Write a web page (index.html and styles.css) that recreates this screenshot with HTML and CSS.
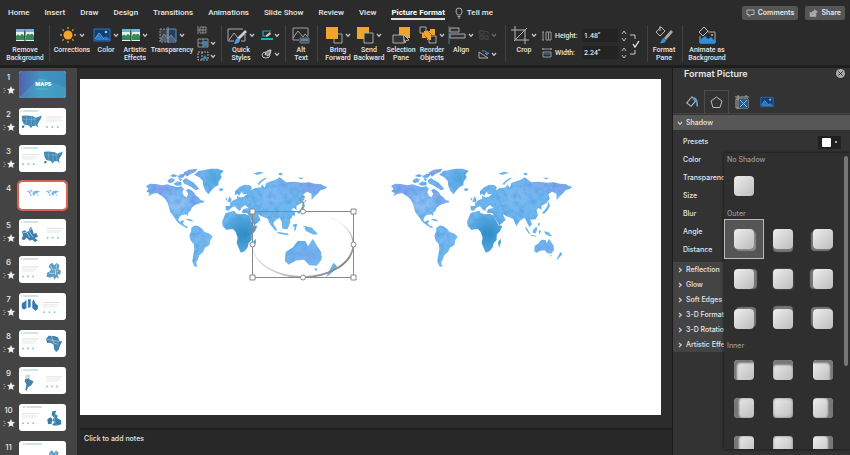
FILE: index.html
```html
<!DOCTYPE html>
<html lang="en">
<head>
<meta charset="utf-8">
<meta name="viewport" content="width=device-width, initial-scale=1">
<title>Presentation editor</title>
<link rel="stylesheet" href="styles.css">
</head>
<body>
<svg class="defs" aria-hidden="true">
  <defs>
    <radialGradient id="violet"><stop offset="0" stop-color="#8b9bee" stop-opacity=".75"/><stop offset="1" stop-color="#8e9df0" stop-opacity="0"/></radialGradient>
    <radialGradient id="pale"><stop offset="0" stop-color="#a3c0f6" stop-opacity=".8"/><stop offset="1" stop-color="#a9c8fa" stop-opacity="0"/></radialGradient>
    <radialGradient id="deep"><stop offset="0" stop-color="#2288bd" stop-opacity=".95"/><stop offset=".6" stop-color="#2d90c8" stop-opacity=".5"/><stop offset="1" stop-color="#2f95cc" stop-opacity="0"/></radialGradient>
    <pattern id="wash" width="600" height="330" patternUnits="userSpaceOnUse">
      <rect width="600" height="330" fill="#6fb7ef"/>
      <ellipse cx="75" cy="85" rx="70" ry="45" fill="url(#violet)"/>
      <ellipse cx="125" cy="130" rx="52" ry="40" fill="url(#pale)"/>
      <ellipse cx="185" cy="105" rx="35" ry="40" fill="url(#violet)"/>
      <ellipse cx="160" cy="40" rx="50" ry="30" fill="url(#violet)"/>
      <ellipse cx="235" cy="55" rx="35" ry="40" fill="url(#deep)" opacity=".4"/>
      <ellipse cx="325" cy="222" rx="70" ry="72" fill="url(#deep)"/>
      <ellipse cx="410" cy="110" rx="55" ry="45" fill="url(#pale)" opacity=".4"/>
      <ellipse cx="530" cy="80" rx="60" ry="34" fill="url(#violet)"/>
      <ellipse cx="455" cy="80" rx="45" ry="30" fill="url(#violet)" opacity=".5"/>
      <ellipse cx="200" cy="232" rx="35" ry="35" fill="url(#pale)" opacity=".4"/>
      <ellipse cx="495" cy="262" rx="35" ry="25" fill="url(#violet)" opacity=".4"/>
    </pattern>
    <filter id="coast" x="-5%" y="-5%" width="110%" height="110%" color-interpolation-filters="sRGB">
      <feTurbulence type="fractalNoise" baseFrequency=".25" numOctaves="2" seed="4" result="grain"/>
      <feDisplacementMap in="SourceGraphic" in2="grain" scale="3" xChannelSelector="R" yChannelSelector="G" result="shape"/>
      <feTurbulence type="fractalNoise" baseFrequency=".06" numOctaves="3" seed="9"/>
      <feColorMatrix values="0 0 0 0 .3  0 0 0 0 .58  0 0 0 0 .86  1.200 0 0 0 -.5"/>
      <feComposite in2="shape" operator="in" result="mottle"/>
      <feMerge><feMergeNode in="shape"/><feMergeNode in="mottle"/></feMerge>
    </filter>
    <linearGradient id="rim" x1="0" y1="0" x2="1" y2="1"><stop offset=".1" stop-color="#aaa" stop-opacity=".05"/><stop offset=".5" stop-color="#aaa" stop-opacity=".5"/><stop offset=".85" stop-color="#888"/></linearGradient>
    <linearGradient id="cover" x1="0" y1="0" x2="1" y2="0"><stop offset="0" stop-color="#5461ad"/><stop offset=".45" stop-color="#4095c2"/><stop offset="1" stop-color="#3c8abd"/></linearGradient>
  </defs>

  <symbol id="land" viewBox="0 0 600 330">
    <g fill="url(#wash)" filter="url(#coast)">
      <path d="M33 78 45 71 62 72 82 76 98 73 112 78 126 82 138 78 147 86 142 96 147 108 155 112 160 101 153 91 162 86 176 96 183 107 190 112 203 127 192 131 180 135 170 143 167 152 160 158 159 168 153 163 139 166 133 172 130 180 135 186 142 181 148 183 143 190 150 197 160 201 154 204 140 196 125 184 117 170 107 158 102 144 98 129 91 117 79 107 66 99 52 102 40 109 44 99 34 94 41 87Z"/>
      <path d="M97 62 108 54 120 58 115 67 103 70ZM115 72 127 64 139 67 140 76 126 77ZM104 48 117 42 128 47 119 52ZM127 49 140 41 151 43 146 52 134 56ZM145 38 161 29 187 26 181 36 166 42 156 50ZM143 61 153 54 163 61 174 67 186 79 193 87 182 91 170 82 158 75 147 71ZM129 56 141 57 137 64ZM152 177 165 177 176 184 166 184ZM197 120 208 123 204 130Z"/>
      <path d="M178 44 189 34 212 29 229 26 248 26 266 33 256 43 260 52 251 65 250 76 238 82 228 92 221 103 211 93 205 78 203 62 193 52ZM251 86 264 85 264 91 256 94Z"/>
      <path d="M169 203 180 196 190 199 201 206 209 216 224 221 233 230 226 241 223 255 210 263 204 276 193 286 189 297 184 306 185 317 190 321 178 319 172 304 175 286 178 268 176 252 167 241 163 227 168 216Z"/>
      <path d="M272 159 298 152 302 160 315 163 329 161 342 167 350 185 356 196 367 198 361 212 350 224 350 240 341 249 338 262 329 274 317 278 311 264 305 249 308 233 302 216 294 207 274 209 263 198 261 186 267 171ZM354 246 362 236 363 247 357 263Z"/>
      <path d="M272 151 272 138 287 138 284 130 295 121 306 116 306 107 315 112 325 111 337 102 325 103 319 95 313 107 307 101 300 106 300 94 312 82 328 74 343 75 351 82 347 91 359 85 377 82 382 73 389 84 394 69 405 65 421 60 434 52 445 60 454 67 478 65 500 68 520 67 540 71 558 73 577 83 566 88 556 91 550 99 538 110 530 120 529 101 516 95 505 103 509 116 499 130 484 137 485 151 476 143 469 150 474 165 467 178 451 179 456 193 448 202 439 182 433 173 420 182 409 199 400 177 383 170 368 162 377 180 358 196 346 176 337 159 320 158 325 147 340 144 330 135 319 143 315 153 307 148 300 139 288 143 282 152ZM277 125 284 108 290 119 287 127ZM271 116 277 113 275 122Z"/>
      <path d="M367 72 378 61 391 53 395 55 379 66 373 75ZM430 40 440 38 443 46 433 45ZM355 41 373 35 386 38 368 44ZM488 53 506 53 500 58ZM486 158 495 149 502 139 505 124 510 137 503 151 492 162ZM564 80 571 77 574 81Z"/>
    </g>
  </symbol>
  <symbol id="oceania" viewBox="0 0 600 330">
    <g fill="url(#wash)" filter="url(#coast)">
      <path d="M464 258 476 250 484 239 496 240 500 248 508 236 514 247 521 258 522 270 514 281 502 280 494 271 481 272 469 279 463 273ZM510 285 515 286 513 290ZM541 276 547 282 542 288 535 296 529 300 532 293Z"/>
      <path d="M435 200 441 205 451 222 447 222 437 208ZM458 211 469 200 472 207 467 220 459 219ZM476 212 483 211 479 224ZM492 214 506 217 516 228 509 229 497 223ZM450 224 468 227 469 230 452 227ZM475 188 479 190 479 198 474 196Z"/>
    </g>
  </symbol>

  <symbol id="caret" viewBox="0 0 6 6"><path d="M1 2 3 4.300 5 2" fill="none" stroke="#ccc" stroke-width="1.200"/></symbol>
  <symbol id="star" viewBox="0 0 12 10"><path d="M8 1 9.200 3.700 12 4 9.900 5.900 10.500 9 8 7.400 5.500 9 6.100 5.900 4 4 6.800 3.700Z" fill="#eee"/><path d="M0 3.500h2M1 5.500h2M0 7.500h2" stroke="#999" stroke-width=".7"/></symbol>
  <symbol id="picture" viewBox="0 0 18 18"><path d="M1 3h16v12H1z" fill="#123f70" stroke="#2f74b8"/><path d="m2 14 4-6 4 5 3-3 4 4z" fill="#2d7cc8"/><path d="m2 13 4-6 5 6" fill="none" stroke="#64aef0"/><circle cx="13" cy="6" r="1.300" fill="#8ac8ff"/></symbol>
  <symbol id="scenery" viewBox="0 0 18 16"><path d="M0 2h18v12H0z" fill="#e5f2f0"/><path d="M0 13V9q2-3 4 0 2-4 4 0V4h1v9zM10 13V9q2-4 4-1 2-3 4 1v4z" fill="#318b54"/><path d="M0 2h8v3H0zM10 2h8v3h-8z" fill="#65b5df"/><path d="M9 0v16" stroke="#2b2b2b"/></symbol>
  <symbol id="paint" viewBox="0 0 16 16"><path d="M2 9 8 2l4 5-5 6z" fill="none" stroke="#bbb" stroke-width="1.200"/><path d="M9 4q5-2 5 9" fill="none" stroke="#4e9ddd" stroke-width="2"/></symbol>
  <symbol id="group" viewBox="0 0 12 12"><path d="M1 1h5v4H1zM7 2h4v3M1 7h4v4H1zM7 7h4v4H7z" fill="none" stroke="#8a9bad" stroke-width=".8"/></symbol>

  <symbol id="usa" viewBox="0 0 60 42"><path d="M1 3 16 2 35 4 42 9 52 5 59 2 57 11 51 20 47 28 50 38 42 31 32 33 28 39 22 31 8 28 2 17Z" fill="#4489b5"/><path d="M16 3 14 29M29 4v28M3 13h42M37 7l4 23" stroke="#a8d7ee"/><path d="M2 32 9 31 8 38 2 38" fill="#3472a2"/></symbol>
  <symbol id="canada" viewBox="0 0 60 50"><path d="m2 18 9-3 5 5 7-3 3-12 7 6 4 14 8-2 5 11-10 4 9 7-7 6-9-8-8 3-9-9-8 8-8-4 5-9z" fill="#3f80b0"/><path d="m5 21 12 1 8 15M24 18l10 17M31 4l-4 11" stroke="#93c9e4" stroke-width="3" fill="none"/></symbol>
  <symbol id="europe" viewBox="0 0 52 56"><path d="m14 8 8-6 5 9 8-8 9 7-4 11 8 6-2 12-8-2 4 14-8-5-5 8-5-10-8 4-12-3 2-12 8-4 4-7-7-6z" fill="#5b9dc6"/><path d="m17 11 5 12 9 1 1 16M12 34l17 1 12-9M35 7l-2 18" stroke="#cce9f7" stroke-width="2" fill="none"/></symbol>
  <symbol id="oz" viewBox="0 0 56 42"><path d="m1 15 10-6 5-6v27l-8 4-7-5zM21 2h8v24l-8 3zM34 10l4-8 6 13 8 7-1 11-7 5-10-9z" fill="#317eae"/><path d="M18 4v28" stroke="#b8deef" stroke-width="2"/></symbol>
  <symbol id="africa" viewBox="0 0 52 54"><path d="m2 12 8-9 17 1 11 4 4 11 9 1-7 13-4 12-7 7-7-8-1-14-9-6-11 1z" fill="#4685b0"/><path d="m5 14 37 7M18 4l7 21 14 4" stroke="#b0d5e8" stroke-width="2" fill="none"/></symbol>
  <symbol id="samerica" viewBox="0 0 36 52"><path d="m7 16 10-2 5 6 10 4-7 12-10 6-4 10-4-2 3-17-5-9z" fill="#4384aa"/><path d="m6 15 2-11 11-1 4 8-9 5z" fill="#c8dbe5"/></symbol>
  <symbol id="uk" viewBox="0 0 48 52"><path d="m17 4 12-2-4 10 8 5-2 7 12 7 1 12-16 4-12-2 8-9-7-4 5-9-7-8zM2 28l9-6 6 5-2 14-11 2z" fill="#347eaa"/><path d="m23 15 2 25 8 8" stroke="#85bfd8" stroke-width="2" fill="none"/></symbol>
  <symbol id="facts" viewBox="0 0 52 36"><path d="M0 2h52" stroke="#999"/><path d="M0 8h45M0 12h49M0 16h38" stroke="#ccc"/><g fill="#8cc3d6"><circle cx="4" cy="32" r="3"/><circle cx="20" cy="32" r="3"/><circle cx="36" cy="32" r="3"/></g></symbol>
  <symbol id="heading" viewBox="0 0 60 6"><path d="M0 1v4" stroke="#555" stroke-width="2"/><path d="M6 3h48" stroke="#67aac2" stroke-width="2"/></symbol>
</svg>

<div class="app">
  <header class="toolbar">
    <div class="menu">
      <nav class="tabs" aria-label="Ribbon tabs">
        <a href="#">Home</a><a href="#">Insert</a><a href="#">Draw</a><a href="#">Design</a><a href="#">Transitions</a><a href="#">Animations</a><a href="#">Slide Show</a><a href="#">Review</a><a href="#">View</a><a href="#" class="current">Picture Format</a>
      </nav>
      <button class="tell"><svg width="8" height="12" viewBox="0 0 8 12"><path d="M2.500 8Q1 6 1 4a3 3 0 0 1 6 0q0 2-1.500 4zM2.500 9.500h3M3 11h2" fill="none" stroke="#ccc" stroke-width=".8"/></svg>Tell me</button>
      <div class="actions">
        <button><svg width="9" height="8" viewBox="0 0 9 8"><path d="M1 1h7v4.500H5L3 7.500v-2H1z" fill="none" stroke="#ccc" stroke-width=".8"/></svg>Comments</button>
        <button><svg width="9" height="8" viewBox="0 0 9 8"><path d="M1 3v4.500h6V5M2.500 5q0-3 3-3V.500L8.500 3 5.500 5V3.500q-2 0-3 1.500" fill="#aaa" stroke="#bbb" stroke-width=".5"/></svg>Share</button>
      </div>
    </div>
    <div class="ribbon">
      <button class="tool"><span class="glyph"><svg width="18" height="16"><use href="#scenery"/></svg></span><span>Remove<br>Background</span></button>
      <i class="rule"></i>
      <button class="tool"><span class="glyph"><svg width="18" height="18" viewBox="0 0 18 18"><circle cx="9" cy="9" r="4.500" fill="#f5a32b"/><path d="M9 1v2M9 15v2M1 9h2M15 9h2M3.400 3.400l1.400 1.400M13.200 13.200l1.400 1.400M3.400 14.600l1.400-1.400M13.200 4.800l1.400-1.400" stroke="#e49a32" stroke-width="1.300"/></svg><svg class="caret"><use href="#caret"/></svg></span><span>Corrections</span></button>
      <button class="tool"><span class="glyph"><svg width="18" height="18"><use href="#picture"/></svg><svg class="caret"><use href="#caret"/></svg></span><span>Color</span></button>
      <button class="tool"><span class="glyph"><svg width="18" height="16"><use href="#scenery"/></svg><svg class="caret"><use href="#caret"/></svg></span><span>Artistic<br>Effects</span></button>
      <button class="tool"><span class="glyph"><svg width="18" height="18" viewBox="0 0 18 18"><path d="M1 3h7v13H1z" fill="#3d424a" stroke="#87919f" stroke-dasharray="2 1"/><path d="M9 3h8v13H9z" fill="#1c4164" stroke="#5b8fbf"/><path d="m1 15 4-7 4 5 3-4 5 6" fill="#46627e" stroke="#9a8178"/><path d="M9 1v16" stroke="#999"/></svg><svg class="caret"><use href="#caret"/></svg></span><span>Transparency</span></button>
      <div class="mini">
        <button aria-label="Compress"><svg width="10" height="10" viewBox="0 0 10 10"><path d="M1 1v8M3 2h6v6H3zM1 5h8M6 2v6" fill="none" stroke="#9aa3ab" stroke-width=".8"/></svg></button>
        <button aria-label="Change picture"><svg width="12" height="10" viewBox="0 0 12 10"><path d="M1 1h10v8H1zM1 5h10M6 1v8" fill="none" stroke="#aaa" stroke-width=".8"/><path d="M6 3h5v5H6z" fill="#3682bc"/></svg><svg class="caret"><use href="#caret"/></svg></button>
        <button aria-label="Reset picture"><svg width="12" height="10" viewBox="0 0 12 10"><path d="M1 1h10v8H1zM5 1v8" fill="none" stroke="#aaa" stroke-dasharray="2 1"/><path d="m5 8 3-4 3 4z" fill="#3682bc"/></svg><svg class="caret"><use href="#caret"/></svg></button>
      </div>
      <i class="rule"></i>
      <button class="tool"><span class="glyph"><svg width="20" height="18" viewBox="0 0 20 18"><path d="M16 3H1v12h6M18 8v7h-4" fill="none" stroke="#aaa"/><path d="m2 14 5-7 5 6" fill="none" stroke="#aaa"/><path d="m10 12 8-8 2 2-8 8z" fill="#ccc"/><path d="m7 18 2-5 3-1 1 3q-2 3-6 3" fill="#4b9fe4"/></svg><svg class="caret"><use href="#caret"/></svg></span><span>Quick<br>Styles</span></button>
      <div class="mini spread">
        <button aria-label="Picture border"><svg width="12" height="10" viewBox="0 0 12 10"><path d="M10 1H2v5h2" fill="none" stroke="#2ba6b2" stroke-width="1.200"/><path d="m4 6 5-4 1 2-4 3z" fill="#ccc"/><path d="M0 8h12v2H0z" fill="#23a9b8"/></svg><svg class="caret"><use href="#caret"/></svg></button>
        <button aria-label="Picture effects"><svg width="12" height="10" viewBox="0 0 12 10"><ellipse cx="5" cy="6" rx="4" ry="3" fill="none" stroke="#bbb"/><path d="M4 6q1-5 6-5 0 5-4 6" fill="#888" stroke="#ddd"/></svg><svg class="caret"><use href="#caret"/></svg></button>
      </div>
      <i class="rule"></i>
      <button class="tool"><span class="glyph"><svg width="20" height="18" viewBox="0 0 20 18"><path d="M8 14H2V2h15v8" fill="none" stroke="#9da1a6"/><path d="m2 12 5-7 5 6 2-3 3 3" fill="none" stroke="#9da1a6"/><path d="M9 12h9v5H9z" fill="#42505e" stroke="#667d92"/><path d="M10 14h7" stroke="#aab"/></svg></span><span>Alt<br>Text</span></button>
      <i class="rule"></i>
      <button class="tool"><span class="glyph"><svg width="18" height="18" viewBox="0 0 18 18"><path d="M9 8h8v9H9z" fill="none" stroke="#aaa"/><path d="M1 1h12v12H1z" fill="#f2a52d"/></svg><svg class="caret"><use href="#caret"/></svg></span><span>Bring<br>Forward</span></button>
      <button class="tool"><span class="glyph"><svg width="18" height="18" viewBox="0 0 18 18"><path d="M1 1h12v12H1z" fill="#f2a52d"/><path d="M8 7h9v10H8z" fill="#2b2b2b" stroke="#aaa"/></svg><svg class="caret"><use href="#caret"/></svg></span><span>Send<br>Backward</span></button>
      <button class="tool"><span class="glyph"><svg width="18" height="18" viewBox="0 0 18 18"><path d="M7 1h11v11H7z" fill="#f2a52d"/><path d="M1 9h11v8H1z" fill="#353535" stroke="#aaa"/><path d="m11 8 6 6-3 .5L13 17z" fill="#222" stroke="#bbb"/></svg></span><span>Selection<br>Pane</span></button>
      <button class="tool"><span class="glyph"><svg width="18" height="18" viewBox="0 0 18 18"><path d="M1 1h6v6H1zM10 10h7v7h-7z" fill="none" stroke="#aaa"/><path d="M5 5h6V3h5v6h-4v5H8v-2H3V7h2z" fill="#f2a52d"/><path d="m8 4 5 5M5 9l5 5" stroke="#c65c28"/></svg><svg class="caret"><use href="#caret"/></svg></span><span>Reorder<br>Objects</span></button>
      <button class="tool"><span class="glyph"><svg width="18" height="18" viewBox="0 0 18 18"><path d="M1 0v18" stroke="#57799a"/><path d="M2 2h9v4H2zM2 8h15v4H2z" fill="#333" stroke="#aaa"/></svg><svg class="caret"><use href="#caret"/></svg></span><span>Align</span></button>
      <div class="mini spread">
        <button aria-label="Group" class="dim"><svg width="12" height="10"><use href="#group"/></svg><svg class="caret"><use href="#caret"/></svg></button>
        <button aria-label="Rotate"><svg width="12" height="10" viewBox="0 0 12 10"><path d="M1 9V3l9 6z" fill="none" stroke="#aaa"/><path d="M4 2q5-1 5 3M9 6 7 4h4z" fill="none" stroke="#3d8ad0"/></svg><svg class="caret"><use href="#caret"/></svg></button>
      </div>
      <i class="rule"></i>
      <button class="tool"><span class="glyph"><svg width="18" height="18" viewBox="0 0 18 18"><path d="M4 0v14h14M0 4h14v14M3 15 16 2" fill="none" stroke="#b5b5b5"/></svg><svg class="caret"><use href="#caret"/></svg></span><span>Crop</span></button>
      <div class="size">
        <div class="field"><svg width="10" height="10" viewBox="0 0 10 10"><path d="M1 1v8M0 1h2M0 9h2M4 1h5v8H4zM6.500 1v8" fill="none" stroke="#999"/></svg><label for="h">Height:</label><input id="h" value="1.48&quot;"><svg width="6" height="12" viewBox="0 0 6 12"><path d="m1 4 2-3 2 3M1 8l2 3 2-3" fill="none" stroke="#bbb"/></svg></div>
        <div class="field"><svg width="10" height="10" viewBox="0 0 10 10"><path d="M0 1h10M1 0v2M9 0v2M1 4h8v5H1z" fill="none" stroke="#999"/><path d="M1 6h8" stroke="#3b82aa"/></svg><label for="w">Width:</label><input id="w" value="2.24&quot;"><svg width="6" height="12" viewBox="0 0 6 12"><path d="m1 4 2-3 2 3M1 8l2 3 2-3" fill="none" stroke="#bbb"/></svg></div>
        <label class="lock"><input type="checkbox" checked aria-label="Lock aspect ratio"><svg width="12" height="26" viewBox="0 0 12 26"><path d="M1 4h5v4M1 23h5v-4" fill="none" stroke="#ccc"/><path d="m4 13 2 3 4-6" fill="none" stroke="#eee" stroke-width="1.300"/></svg></label>
      </div>
      <i class="rule"></i>
      <button class="tool"><span class="glyph"><svg width="18" height="18" viewBox="0 0 18 18"><path d="m1 6 5-5 4 4-5 5zM5 0v5" fill="none" stroke="#bbb"/><path d="m9 12 7-8 2 2-7 8z" fill="#aaa"/><path d="m5 17 3-5 3 2q-1 4-6 3" fill="#368ee0"/></svg></span><span>Format<br>Pane</span></button>
      <i class="rule"></i>
      <button class="tool"><span class="glyph"><svg width="18" height="18" viewBox="0 0 18 18"><path d="M10 6h7v11H2V10" fill="none" stroke="#aaa"/><path d="m1 6 5-5 4 4-5 5z" fill="none" stroke="#aac4d8"/><path d="M2 17v-3l5-4 3 3 3-2 4 4v2z" fill="#2f8fe0"/><circle cx="14" cy="9" r="1" fill="#f0b23c"/></svg></span><span>Animate as<br>Background</span></button>
    </div>
  </header>

  <main class="workspace">
    <ol class="slides" aria-label="Slides">
      <li><span class="num">1<svg><use href="#star"/></svg></span><svg class="thumb" viewBox="0 0 141 81"><path d="M0 0h141v81H0z" fill="url(#cover)"/><path d="M0 81 60 20l81 30v31z" fill="#4dc0ca" opacity=".3"/><text class="logo" x="73" y="46">MAPS</text><path d="M58 27h24M52 54h36" stroke="#add4e6" stroke-width="2" opacity=".5"/></svg></li>
      <li><span class="num">2<svg><use href="#star"/></svg></span><svg class="thumb" viewBox="0 0 141 81"><use href="#heading" x="7" y="6" width="56" height="6"/><use href="#usa" x="7" y="20" width="62" height="44"/><use href="#facts" x="80" y="25" width="52" height="36"/></svg></li>
      <li><span class="num">3<svg><use href="#star"/></svg></span><svg class="thumb" viewBox="0 0 141 81"><use href="#heading" x="7" y="6" width="56" height="6"/><use href="#usa" x="74" y="16" width="58" height="44"/><use href="#facts" x="8" y="26" width="52" height="36"/></svg></li>
      <li class="selected"><span class="num">4</span><svg class="thumb" viewBox="0 0 141 81"><use href="#land" x="22" y="22" width="42" height="23"/><use href="#oceania" x="22" y="22" width="42" height="23"/><use href="#land" x="79" y="22" width="42" height="23"/><use href="#oceania" x="79" y="22" width="42" height="23"/></svg></li>
      <li><span class="num">5<svg><use href="#star"/></svg></span><svg class="thumb" viewBox="0 0 141 81"><use href="#heading" x="7" y="6" width="56" height="6"/><use href="#canada" x="7" y="17" width="60" height="54"/><use href="#facts" x="82" y="25" width="50" height="36"/></svg></li>
      <li><span class="num">6<svg><use href="#star"/></svg></span><svg class="thumb" viewBox="0 0 141 81"><use href="#heading" x="7" y="6" width="56" height="6"/><use href="#europe" x="78" y="18" width="52" height="55"/><use href="#facts" x="8" y="30" width="50" height="36"/></svg></li>
      <li><span class="num">7<svg><use href="#star"/></svg></span><svg class="thumb" viewBox="0 0 141 81"><use href="#heading" x="7" y="6" width="56" height="6"/><use href="#oz" x="7" y="16" width="54" height="42"/><use href="#facts" x="72" y="26" width="50" height="36"/></svg></li>
      <li><span class="num">8<svg><use href="#star"/></svg></span><svg class="thumb" viewBox="0 0 141 81"><use href="#heading" x="7" y="6" width="56" height="6"/><use href="#africa" x="78" y="14" width="54" height="54"/><use href="#facts" x="8" y="24" width="50" height="36"/></svg></li>
      <li><span class="num">9<svg><use href="#star"/></svg></span><svg class="thumb" viewBox="0 0 141 81"><use href="#heading" x="7" y="6" width="56" height="6"/><use href="#samerica" x="12" y="18" width="36" height="54"/><use href="#facts" x="80" y="27" width="50" height="36"/></svg></li>
      <li><span class="num">10<svg><use href="#star"/></svg></span><svg class="thumb" viewBox="0 0 141 81"><use href="#heading" x="7" y="6" width="76" height="6"/><use href="#uk" x="83" y="16" width="48" height="56"/><use href="#facts" x="8" y="26" width="50" height="36"/></svg></li>
      <li><span class="num">11</span><svg class="thumb" viewBox="0 0 141 81"><use href="#heading" x="7" y="6" width="76" height="6"/><use href="#europe" x="78" y="26" width="50" height="50"/></svg></li>
    </ol>

    <section class="editor">
      <div class="stage">
        <svg class="slide" viewBox="0 0 581 336" role="img" aria-label="Two watercolor world maps">
          <use href="#land" x="55" y="81" width="200" height="110"/>
          <use href="#land" x="300" y="81" width="200" height="110"/>
          <use href="#oceania" x="300" y="81" width="200" height="110"/>
          <g transform="translate(204.300 159.200) scale(1.870 1.800) translate(-154 -78.300)"><use href="#oceania" width="200" height="110"/></g>
          <path d="M172 166a51 33 0 1 0 102 0a51 33 0 1 0-102 0M172.500 165a50 32.200 0 1 0 100 0a50 32.200 0 1 0-100 0" fill="url(#rim)" fill-rule="evenodd"/>
          <g fill="#fff" stroke="#888">
            <path d="M172.500 132.500h101v66h-101zM223 132v-9" fill="none"/>
            <path d="M170 130h5v5h-5zM271 130h5v5h-5zM170 196h5v5h-5zM271 196h5v5h-5z"/>
            <circle cx="223" cy="132.500" r="2.500"/><circle cx="223" cy="198.500" r="2.500"/><circle cx="172.500" cy="165.500" r="2.500"/><circle cx="273.500" cy="165.500" r="2.500"/>
            <path d="M225 118a3 3 0 1 0 1 3" fill="none"/>
          </g>
        </svg>
      </div>
      <label class="notes"><textarea aria-label="Notes" placeholder="Click to add notes"></textarea></label>
    </section>

    <aside class="pane">
      <div class="title"><h2>Format Picture</h2><button aria-label="Close"><svg width="9" height="9" viewBox="0 0 9 9"><circle cx="4.500" cy="4.500" r="4.500" fill="#aaa"/><path d="m2.500 2.500 4 4m0-4-4 4" stroke="#333"/></svg></button></div>
      <div class="kinds">
        <button aria-label="Fill and line"><svg width="14" height="14"><use href="#paint"/></svg></button>
        <button aria-label="Effects" class="on"><svg width="13" height="13" viewBox="0 0 13 13"><path d="m6.500 1 5.500 4-2 6.500H3L1 5z" fill="none" stroke="#bbb"/></svg></button>
        <button aria-label="Size and properties"><svg width="14" height="14" viewBox="0 0 14 14"><path d="M3 0v14M0 2h14M11 0v2M1 4h12v9H1z" fill="none" stroke="#aaa"/><path d="M4 4h9v9H4z" fill="#235b8c"/><path d="m5 5 7 7m0-7-7 7" stroke="#84bce8"/></svg></button>
        <button aria-label="Picture"><svg width="14" height="14"><use href="#picture"/></svg></button>
      </div>
      <button class="section open"><svg class="caret"><use href="#caret"/></svg>Shadow</button>
      <div class="settings">
        <div class="presets-row"><span>Presets</span><button aria-label="Shadow presets"><i></i><b></b></button></div>
        <div>Color</div><div>Transparency</div><div>Size</div><div>Blur</div><div>Angle</div><div>Distance</div>
      </div>
      <div class="sections">
        <button class="section"><svg class="caret"><use href="#caret"/></svg>Reflection</button>
        <button class="section"><svg class="caret"><use href="#caret"/></svg>Glow</button>
        <button class="section"><svg class="caret"><use href="#caret"/></svg>Soft Edges</button>
        <button class="section"><svg class="caret"><use href="#caret"/></svg>3-D Format</button>
        <button class="section"><svg class="caret"><use href="#caret"/></svg>3-D Rotation</button>
        <button class="section"><svg class="caret"><use href="#caret"/></svg>Artistic Effects</button>
      </div>
      <div class="gallery">
        <h3>No Shadow</h3>
        <div class="grid none"><button aria-label="No shadow"><i></i></button></div>
        <h3>Outer</h3>
        <div class="grid outer">
          <button class="chosen" aria-label="Bottom right"><i class="se"></i></button><button aria-label="Bottom"><i class="s"></i></button><button aria-label="Bottom left"><i class="sw"></i></button>
          <button aria-label="Right"><i class="e"></i></button><button aria-label="Center"><i class="c"></i></button><button aria-label="Left"><i class="w"></i></button>
          <button aria-label="Top right"><i class="ne"></i></button><button aria-label="Top"><i class="n"></i></button><button aria-label="Top left"><i class="nw"></i></button>
        </div>
        <h3>Inner</h3>
        <div class="grid inner">
          <button aria-label="Inside top left"><i class="nw"></i></button><button aria-label="Inside top"><i class="n"></i></button><button aria-label="Inside top right"><i class="ne"></i></button>
          <button aria-label="Inside left"><i class="w"></i></button><button aria-label="Inside center"><i class="c"></i></button><button aria-label="Inside right"><i class="e"></i></button>
          <button aria-label="Inside bottom left"><i class="w"></i></button><button aria-label="Inside bottom"><i class="c"></i></button><button aria-label="Inside bottom right"><i class="e"></i></button>
        </div>
        <span class="scroll"></span>
      </div>
    </aside>
  </main>
</div>
</body>
</html>
```
FILE: styles.css
```css
* { box-sizing: border-box; }
body { margin: 0; background: #222; color: #e6e6e6; font: 500 7px/8px Inter, "Liberation Sans", sans-serif; }
button, input, textarea { font: inherit; color: inherit; background: none; border: 0; padding: 0; margin: 0; }
button { display: flex; align-items: center; }
a { color: inherit; text-decoration: none; }
svg { display: block; flex: none; }
.defs { position: absolute; width: 0; height: 0; }
.app { display: flex; flex-direction: column; height: 100vh; overflow: hidden; }
.caret { width: 6px; height: 6px; }

.toolbar { flex: none; background: #2b2b2b; border-bottom: 3px solid #1e1e1e; font-family: Roboto, "Liberation Sans", sans-serif; }
.menu { display: flex; align-items: center; padding: 5px 5px 0 8px; font-size: 8px; }
.tabs { display: flex; gap: 15px; line-height: 11px; }
.tabs a { padding-top: 2px; border-bottom: 2px solid transparent; white-space: nowrap; }
.tabs .current { font-weight: 700; border-color: #ddd; color: #fff; }
.tell { gap: 4px; margin-left: 10px; }
.actions { display: flex; gap: 7px; margin-left: auto; font: 600 7px/8px Inter, sans-serif; }
.actions button { gap: 3px; height: 14px; padding: 0 4px; border-radius: 2px; background: #555; }

.ribbon {
  display: grid;
  grid-template-columns: 44px 5px 40px 28px 30px 44px 24px 6px 34px 23px 9px 22px 11px 30px 32px 32px 30px 28px 25px 10px 28px 103px 12px 22px 15px 34px;
  height: 45px;
  padding: 5px 3px 0;
}
.rule { justify-self: center; width: 1px; height: 37px; background: #414141; }
.tool { flex-direction: column; justify-content: flex-start; justify-self: center; gap: 1px; text-align: center; white-space: nowrap; }
.glyph { display: flex; align-items: center; gap: 2px; height: 20px; }
.mini { display: flex; flex-direction: column; align-items: flex-start; gap: 3px; padding-left: 3px; }
.mini button { gap: 1px; }
.mini.spread { padding-top: 5px; gap: 9px; }
.dim { opacity: .4; }
.size { display: grid; grid-template-columns: 1fr 12px; grid-template-rows: 13px 13px; gap: 4px 2px; padding: 4px 0 0 4px; }
.field { display: grid; grid-template-columns: 10px 24px 36px 6px; gap: 3px; align-items: center; grid-column: 1; }
.field input { width: 100%; height: 13px; padding-left: 2px; background: #232323; }
.lock { grid-column: 2; grid-row: 1 / 3; align-self: center; position: relative; }
.lock input { position: absolute; inset: 0; opacity: 0; }

.workspace { flex: 1; min-height: 0; display: grid; grid-template-columns: 80px 1fr 178px; }
.slides { display: flex; flex-direction: column; gap: 10px; margin: 0; padding: 3px 0 0; list-style: none; overflow: hidden; background: #444; border-right: 3px solid #292929; }
.slides li { flex: none; display: grid; grid-template-columns: 13px 47px; gap: 6px; height: 27px; }
.num { display: flex; flex-direction: column; align-items: center; gap: 4px; padding-top: 2px; font-size: 8px; line-height: 8px; text-align: center; }
.num svg { width: 12px; height: 10px; }
.slides li .num { width: 17px; }
.thumb { width: 47px; height: 27px; border-radius: 3px; background: #fff; }
.selected .thumb { outline: 2px solid #d76355; }
.logo { fill: #fff; font-size: 16px; font-weight: 800; text-anchor: middle; }

.editor { display: flex; flex-direction: column; min-width: 0; background: #2c2c2c; }
.stage { flex: 1; min-height: 0; padding: 11px 11px 0 0; }
.slide { width: 100%; background: #fff; }
.notes { flex: none; border-top: 2px solid #1e1e1e; background: #282828; }
.notes textarea { display: block; width: 100%; height: 25px; padding: 4px; resize: none; font: 500 7px/9px Inter, sans-serif; }
.notes textarea::placeholder { color: #e6e6e6; }

.pane { position: relative; min-width: 0; background: #333; border-left: 1px solid #1c1c1c; }
.title { display: flex; justify-content: space-between; padding: 0 5px 0 11px; }
h2 { margin: 0; font-size: 9px; line-height: 11px; font-weight: 600; }
.kinds { display: flex; height: 24px; margin-top: 11px; padding-left: 6px; border-bottom: 1px solid #444; }
.kinds button { justify-content: center; width: 25px; }
.kinds .on { border: 1px solid #4b4b4b; border-bottom: 0; }
.section { gap: 3px; width: 100%; height: 15px; padding-left: 4px; background: #444; }
.section .caret { transform: rotate(-90deg); }
.section.open { margin-top: 1px; background: #575757; }
.section.open .caret { transform: none; }
.settings { display: grid; grid-auto-rows: 18px; align-items: center; padding: 3px 9px 3px 10px; }
.presets-row { display: flex; justify-content: space-between; align-items: center; }
.presets-row button { gap: 4px; height: 13px; padding: 0 4px; background: #202020; }
.presets-row i { width: 9px; height: 9px; border-radius: 1px; background: #fff; }
.presets-row b { width: 2px; height: 2px; border-radius: 50%; background: #ddd; }

.gallery { position: absolute; top: 85px; left: 51px; right: 0; height: 296px; padding-right: 7px; overflow: hidden; background: #2f2f2f; box-shadow: 0 0 3px #111; }
h3 { margin: 0; padding: 2px 3px 1px; font: 500 7px/9px Inter, sans-serif; color: #999; }
.grid { display: grid; grid-template-columns: repeat(3, 1fr); }
.none { grid-auto-rows: 42px; }
.outer { grid-auto-rows: 40px; }
.inner { grid-auto-rows: 38px; }
.grid button { justify-content: center; border: 1px solid transparent; }
.grid .chosen { background: #555; border-color: #bbb; }
.grid i { width: 20px; height: 20px; border-radius: 4px; background: linear-gradient(135deg, #eee, #bcbcbc); }
.outer .se { box-shadow: 2px 2px 1px #888; }
.outer .s { box-shadow: 0 3px 1px #777; }
.outer .sw { box-shadow: -2px 2px 1px #777; }
.outer .e { box-shadow: 3px 0 1px #777; }
.outer .c { box-shadow: 0 0 2px #777; }
.outer .w { box-shadow: -3px 0 1px #777; }
.outer .ne { box-shadow: 2px -2px 1px #777; }
.outer .n { box-shadow: 0 -3px 1px #777; }
.outer .nw { box-shadow: -2px -2px 1px #777; }
.inner .nw { box-shadow: inset 3px 3px 2px #777; }
.inner .n { box-shadow: inset 0 5px 2px #777; }
.inner .ne { box-shadow: inset -3px 3px 2px #777; }
.inner .w { box-shadow: inset 5px 0 2px #777; }
.inner .c { box-shadow: inset 0 0 3px #777; }
.inner .e { box-shadow: inset -5px 0 2px #777; }
.scroll { position: absolute; top: 3px; right: 2px; width: 4px; height: 210px; border-radius: 2px; background: #777; }
```
